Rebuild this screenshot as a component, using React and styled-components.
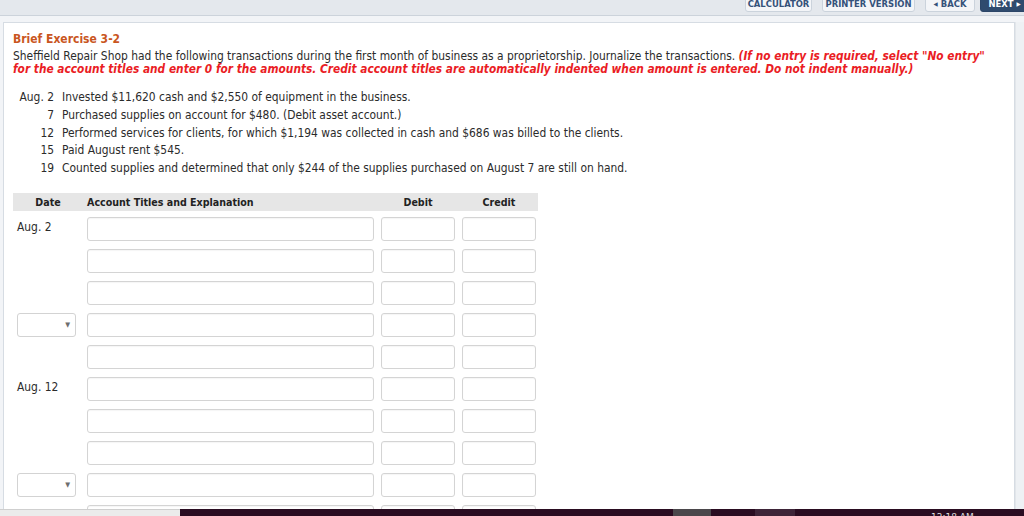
import React from "react";
import styled, { createGlobalStyle } from "styled-components";

const Global = createGlobalStyle`
  html, body { margin: 0; padding: 0; background: #f2f4f7; }
  body { font-family: "DejaVu Sans Condensed", "DejaVu Sans", sans-serif; color: #2b2b2b; }
  * { box-sizing: border-box; }
`;

const Page = styled.div`
  width: 1024px;
  height: 516px;
  display: flex;
  flex-direction: column;
  overflow: hidden;
`;

const TopBar = styled.div`
  height: 16px;
  flex: none;
  background: #e4e8ed;
  border-bottom: 1px solid #ccd3db;
  display: flex;
  justify-content: flex-end;
  align-items: flex-end;
  padding-bottom: 3px;
  overflow: hidden;
`;

const TopButton = styled.div`
  height: 20px;
  width: ${(p) => p.$w}px;
  margin-right: ${(p) => p.$mr || 0}px;
  flex: none;
  display: flex;
  align-items: flex-end;
  justify-content: center;
  padding-bottom: 3px;
  border-radius: 3px;
  border: 1px solid ${(p) => (p.$primary ? "#2c4668" : "#cbd3dc")};
  background: ${(p) => (p.$primary ? "#2f4b6e" : "#f3f5f8")};
  color: ${(p) => (p.$primary ? "#ffffff" : "#35527a")};
  font-family: "DejaVu Sans Condensed", "DejaVu Sans", sans-serif;
  font-weight: bold;
  font-size: 9.4px;
  line-height: 1;
  white-space: nowrap;
`;

const Arrow = styled.span`
  font-size: 6px;
  margin-right: 3px;
  margin-left: ${(p) => (p.$after ? "3px" : "0")};
  position: relative;
  top: -1px;
`;

const Main = styled.div`
  flex: 1;
  display: flex;
  padding: 6px 0 0 3px;
  min-height: 0;
`;

const Panel = styled.div`
  flex: 1;
  background: #ffffff;
  border: 1px solid #d6dce3;
  border-bottom: none;
  padding: 9px 9px 0 9px;
  overflow: hidden;
`;

const ScrollStrip = styled.div`
  width: 9px;
  flex: none;
  background: #eef1f4;
  border-left: 1px solid #e2e6ea;
`;

const Title = styled.div`
  font-weight: bold;
  font-size: 12px;
  line-height: 15px;
  color: #c9561e;
`;

const Desc = styled.div`
  margin-top: 3px;
  width: 985px;
  font-size: 11.9px;
  line-height: 13px;
  color: #2b2b2b;
`;

const Warn = styled.span`
  color: #ea1c24;
  font-weight: bold;
  font-style: italic;
  font-size: 11.8px;
`;

const TxList = styled.div`
  margin-top: 13px;
  padding-left: 5px;
  display: grid;
  grid-template-columns: 36px 1fr;
  column-gap: 8px;
  font-size: 11.9px;
  line-height: 17.8px;
  color: #2b2b2b;
`;

const TxDate = styled.div`
  text-align: right;
  white-space: nowrap;
`;

const TxText = styled.div`
  white-space: nowrap;
`;

const Table = styled.div`
  margin-top: 15px;
  width: 525px;
`;

const Cols = styled.div`
  display: grid;
  grid-template-columns: 74px 294px 81px 76px;
`;

const HeadRow = styled(Cols)`
  height: 18px;
  background: #e6e6e6;
  align-items: center;
  font-weight: bold;
  font-size: 10.6px;
  color: #222;
  margin-bottom: 6px;
`;

const HeadCell = styled.div`
  text-align: ${(p) => p.$align || "center"};
  padding-right: ${(p) => p.$pr || 0}px;
  width: ${(p) => (p.$w ? p.$w + "px" : "auto")};
`;

const Row = styled(Cols)`
  height: 32px;
  align-items: start;
`;

const DateCell = styled.div`
  padding-left: 4px;
  padding-top: 3px;
  font-size: 11.9px;
  color: #2b2b2b;
`;

const SelectBox = styled.div`
  width: 59px;
  height: 24px;
  margin-top: -3px;
  border: 1px solid #d3d3d3;
  border-radius: 3px;
  background: #fff;
  display: flex;
  align-items: center;
  justify-content: flex-end;
  padding-right: 5px;
  font-size: 7px;
  color: #6e6e6e;
`;

const Field = styled.div`
  width: ${(p) => p.$w}px;
  height: 24px;
  border: 1px solid #d4d4d4;
  border-radius: 3px;
  background: #fff;
  box-shadow: inset 0 1px 1px rgba(0, 0, 0, 0.04);
`;

const Taskbar = styled.div`
  height: 7px;
  flex: none;
  display: flex;
`;

const TaskSeg = styled.div`
  width: ${(p) => (p.$w ? p.$w + "px" : "auto")};
  flex: ${(p) => (p.$w ? "none" : 1)};
  background: ${(p) => p.$bg};
  border-top: ${(p) => (p.$light ? "1px solid #cfcfcf" : "none")};
  color: #ddd;
  font-family: "DejaVu Sans", sans-serif;
  font-size: 9px;
  line-height: 16px;
  overflow: hidden;
  white-space: nowrap;
  padding-left: ${(p) => p.$pl || 0}px;
`;

const transactions = [
  ["Aug. 2", "Invested $11,620 cash and $2,550 of equipment in the business."],
  ["7", "Purchased supplies on account for $480. (Debit asset account.)"],
  ["12", "Performed services for clients, for which $1,194 was collected in cash and $686 was billed to the clients."],
  ["15", "Paid August rent $545."],
  ["19", "Counted supplies and determined that only $244 of the supplies purchased on August 7 are still on hand."],
];

const rows = [
  { date: "Aug. 2" },
  {},
  {},
  { select: true },
  {},
  { date: "Aug. 12" },
  {},
  {},
  { select: true },
  {},
];

export default function App() {
  return (
    <Page>
      <Global />
      <TopBar>
        <TopButton $w={67} $mr={10}>CALCULATOR</TopButton>
        <TopButton $w={93} $mr={10}>PRINTER VERSION</TopButton>
        <TopButton $w={50} $mr={5}>
          <Arrow>◀</Arrow>BACK
        </TopButton>
        <TopButton $w={52} $mr={-8} $primary>
          NEXT<Arrow $after>▶</Arrow>
        </TopButton>
      </TopBar>
      <Main>
        <Panel>
          <Title>Brief Exercise 3-2</Title>
          <Desc>
            Sheffield Repair Shop had the following transactions during the first month of business as a
            proprietorship. Journalize the transactions.{" "}
            <Warn>
              (If no entry is required, select "No entry" for the account titles and enter 0 for the amounts.
              Credit account titles are automatically indented when amount is entered. Do not indent manually.)
            </Warn>
          </Desc>
          <TxList>
            {transactions.map(([d, t]) => (
              <React.Fragment key={d}>
                <TxDate>{d}</TxDate>
                <TxText>{t}</TxText>
              </React.Fragment>
            ))}
          </TxList>
          <Table>
            <HeadRow>
              <HeadCell $pr={4}>Date</HeadCell>
              <HeadCell $align="left">Account Titles and Explanation</HeadCell>
              <HeadCell $w={74}>Debit</HeadCell>
              <HeadCell $w={74}>Credit</HeadCell>
            </HeadRow>
            {rows.map((r, i) => (
              <Row key={i}>
                <DateCell>
                  {r.date}
                  {r.select && <SelectBox>▼</SelectBox>}
                </DateCell>
                <Field $w={287} />
                <Field $w={74} />
                <Field $w={74} />
              </Row>
            ))}
          </Table>
        </Panel>
        <ScrollStrip />
      </Main>
      <Taskbar>
        <TaskSeg $w={180} $bg="#ebebeb" $light />
        <TaskSeg $w={493} $bg="#2a0c21" />
        <TaskSeg $w={38} $bg="#4b474b" />
        <TaskSeg $w={44} $bg="#2a0c21" />
        <TaskSeg $w={40} $bg="#3e2438" />
        <TaskSeg $bg="#2a0c21" $pl={136}>12:18 AM</TaskSeg>
      </Taskbar>
    </Page>
  );
}
